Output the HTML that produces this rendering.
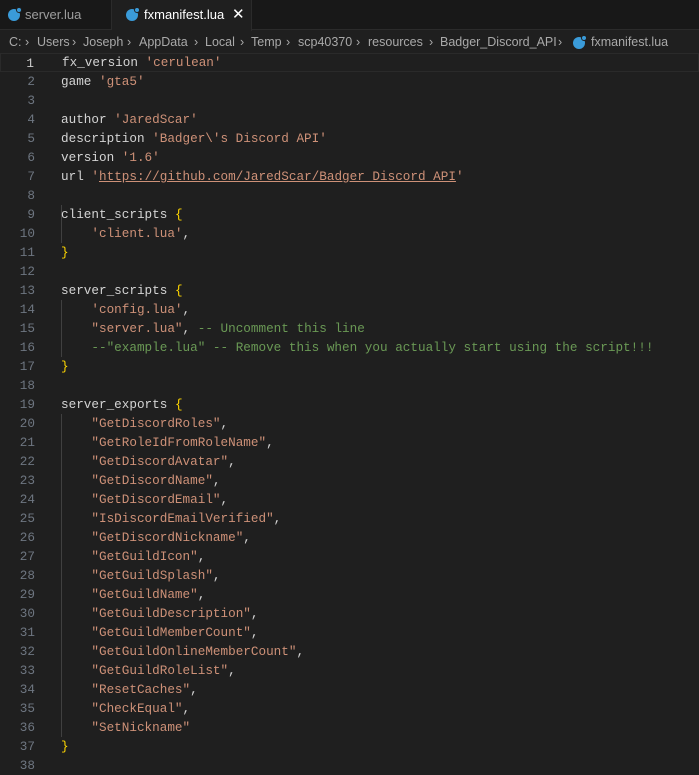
<!DOCTYPE html>
<html><head><meta charset="utf-8"><style>
*{margin:0;padding:0;box-sizing:border-box}
body{width:699px;height:764px;background:#1f1f1f;overflow:hidden;font-family:"Liberation Sans",sans-serif;position:relative}
.tabs{position:absolute;top:0;left:0;width:699px;height:30px;background:#181818;border-bottom:1px solid #2b2b2b}
.tab{position:absolute;top:0;height:30px;font-size:13px;line-height:30px;color:#9d9d9d}
.t1{left:0;width:112px;border-right:1px solid #2b2b2b}
.t2{left:112px;width:140px;background:#1f1f1f;color:#fff;border-right:1px solid #2b2b2b;height:31px}
.ic{position:absolute;top:9px;width:12px;height:12px;border-radius:50%;background:#3a9bd9}
.ic:after{content:"";position:absolute;right:-2px;top:-2px;width:4px;height:4px;border-radius:50%;background:#3a9bd9;border:1px solid #1f1f1f}
.crumb{position:absolute;top:31px;left:0;width:699px;height:22px;line-height:22px;font-size:12.5px;color:#a9a9a9;white-space:pre}
.crumb span{position:absolute;top:0}
.ed{position:absolute;top:53px;left:0;width:699px;font-family:"Liberation Mono",monospace;font-size:12.67px}
.l{height:19px;line-height:19px;position:relative;white-space:pre}
.n{position:absolute;right:664px;color:#6e7681;text-align:right}
.c{position:absolute;left:61px;color:#d4d4d4}
.cur{border:1px solid #2a2a2a;}
.s{color:#ce9178}.m{color:#6a9955}.b{color:#ffd700}.u{text-decoration:underline}
.g{position:absolute;left:61px;width:1px;background:#404040}
</style></head><body>
<div class="tabs">
<div class="tab t1"><span class="ic" style="left:8px"></span><span style="position:absolute;left:25px">server.lua</span></div>
<div class="tab t2"><span class="ic" style="left:14px"></span><span style="position:absolute;left:32px">fxmanifest.lua</span><span style="position:absolute;left:120px;font-size:15px">✕</span></div>
</div>
<div class="crumb">
<span style="left:9px">C:</span><span style="left:25px">›</span>
<span style="left:37px">Users</span><span style="left:72px">›</span>
<span style="left:83px">Joseph</span><span style="left:127px">›</span>
<span style="left:139px">AppData</span><span style="left:194px">›</span>
<span style="left:205px">Local</span><span style="left:240px">›</span>
<span style="left:251px">Temp</span><span style="left:286px">›</span>
<span style="left:298px">scp40370</span><span style="left:356px">›</span>
<span style="left:368px">resources</span><span style="left:429px">›</span>
<span style="left:440px">Badger_Discord_API</span><span style="left:558px">›</span>
<span style="left:591px">fxmanifest.lua</span>
</div>
<span class="ic" style="position:absolute;top:37px;left:573px"></span>
<div class="g" style="top:205px;height:38px"></div>
<div class="g" style="top:300px;height:57px"></div>
<div class="g" style="top:414px;height:323px"></div>
<div class="ed">
<div class="l cur"><span class="n" style="color:#ccc">1</span><span class="c" style="top:-1px">fx_version <span class="s">'cerulean'</span></span></div>
<div class="l"><span class="n">2</span><span class="c">game <span class="s">'gta5'</span></span></div>
<div class="l"><span class="n">3</span></div>
<div class="l"><span class="n">4</span><span class="c">author <span class="s">'JaredScar'</span></span></div>
<div class="l"><span class="n">5</span><span class="c">description <span class="s">'Badger\'s Discord API'</span></span></div>
<div class="l"><span class="n">6</span><span class="c">version <span class="s">'1.6'</span></span></div>
<div class="l"><span class="n">7</span><span class="c">url <span class="s">'<span class="u">https://github.com/JaredScar/Badger_Discord_API</span>'</span></span></div>
<div class="l"><span class="n">8</span></div>
<div class="l"><span class="n">9</span><span class="c">client_scripts <span class="b">{</span></span></div>
<div class="l"><span class="n">10</span><span class="c">    <span class="s">'client.lua'</span>,</span></div>
<div class="l"><span class="n">11</span><span class="c"><span class="b">}</span></span></div>
<div class="l"><span class="n">12</span></div>
<div class="l"><span class="n">13</span><span class="c">server_scripts <span class="b">{</span></span></div>
<div class="l"><span class="n">14</span><span class="c">    <span class="s">'config.lua'</span>,</span></div>
<div class="l"><span class="n">15</span><span class="c">    <span class="s">"server.lua"</span>, <span class="m">-- Uncomment this line</span></span></div>
<div class="l"><span class="n">16</span><span class="c">    <span class="m">--"example.lua" -- Remove this when you actually start using the script!!!</span></span></div>
<div class="l"><span class="n">17</span><span class="c"><span class="b">}</span></span></div>
<div class="l"><span class="n">18</span></div>
<div class="l"><span class="n">19</span><span class="c">server_exports <span class="b">{</span></span></div>
<div class="l"><span class="n">20</span><span class="c">    <span class="s">"GetDiscordRoles"</span>,</span></div>
<div class="l"><span class="n">21</span><span class="c">    <span class="s">"GetRoleIdFromRoleName"</span>,</span></div>
<div class="l"><span class="n">22</span><span class="c">    <span class="s">"GetDiscordAvatar"</span>,</span></div>
<div class="l"><span class="n">23</span><span class="c">    <span class="s">"GetDiscordName"</span>,</span></div>
<div class="l"><span class="n">24</span><span class="c">    <span class="s">"GetDiscordEmail"</span>,</span></div>
<div class="l"><span class="n">25</span><span class="c">    <span class="s">"IsDiscordEmailVerified"</span>,</span></div>
<div class="l"><span class="n">26</span><span class="c">    <span class="s">"GetDiscordNickname"</span>,</span></div>
<div class="l"><span class="n">27</span><span class="c">    <span class="s">"GetGuildIcon"</span>,</span></div>
<div class="l"><span class="n">28</span><span class="c">    <span class="s">"GetGuildSplash"</span>,</span></div>
<div class="l"><span class="n">29</span><span class="c">    <span class="s">"GetGuildName"</span>,</span></div>
<div class="l"><span class="n">30</span><span class="c">    <span class="s">"GetGuildDescription"</span>,</span></div>
<div class="l"><span class="n">31</span><span class="c">    <span class="s">"GetGuildMemberCount"</span>,</span></div>
<div class="l"><span class="n">32</span><span class="c">    <span class="s">"GetGuildOnlineMemberCount"</span>,</span></div>
<div class="l"><span class="n">33</span><span class="c">    <span class="s">"GetGuildRoleList"</span>,</span></div>
<div class="l"><span class="n">34</span><span class="c">    <span class="s">"ResetCaches"</span>,</span></div>
<div class="l"><span class="n">35</span><span class="c">    <span class="s">"CheckEqual"</span>,</span></div>
<div class="l"><span class="n">36</span><span class="c">    <span class="s">"SetNickname"</span></span></div>
<div class="l"><span class="n">37</span><span class="c"><span class="b">}</span></span></div>
<div class="l"><span class="n">38</span></div>
</div>
</body></html>
